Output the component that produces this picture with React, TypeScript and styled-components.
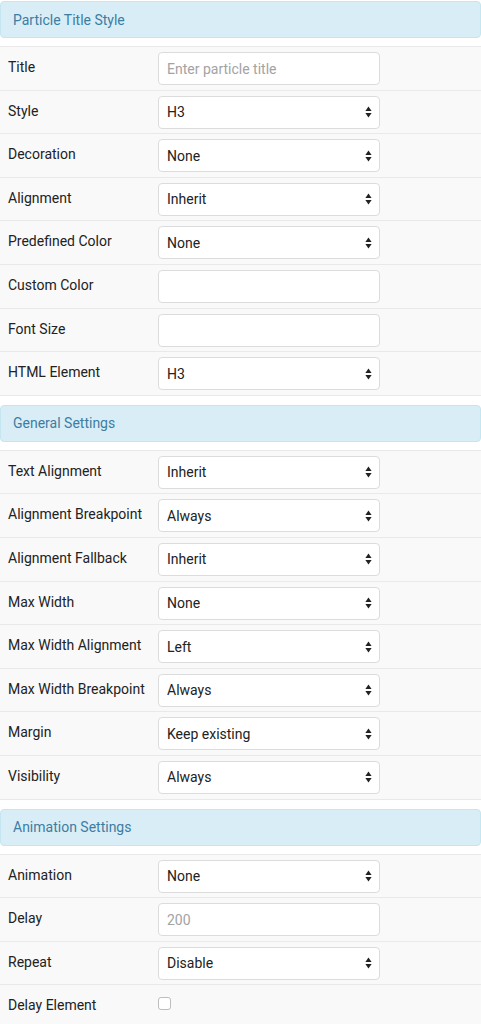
import React from 'react'
import styled, { createGlobalStyle } from 'styled-components'

type Field =
  | { label: string; kind: 'select'; value: string }
  | { label: string; kind: 'text'; value?: string; placeholder?: string }
  | { label: string; kind: 'checkbox' }

type Section = {
  title: string
  fields: Field[]
}

const SECTIONS: Section[] = [
  {
    title: 'Particle Title Style',
    fields: [
      { label: 'Title', kind: 'text', placeholder: 'Enter particle title' },
      { label: 'Style', kind: 'select', value: 'H3' },
      { label: 'Decoration', kind: 'select', value: 'None' },
      { label: 'Alignment', kind: 'select', value: 'Inherit' },
      { label: 'Predefined Color', kind: 'select', value: 'None' },
      { label: 'Custom Color', kind: 'text' },
      { label: 'Font Size', kind: 'text' },
      { label: 'HTML Element', kind: 'select', value: 'H3' },
    ],
  },
  {
    title: 'General Settings',
    fields: [
      { label: 'Text Alignment', kind: 'select', value: 'Inherit' },
      { label: 'Alignment Breakpoint', kind: 'select', value: 'Always' },
      { label: 'Alignment Fallback', kind: 'select', value: 'Inherit' },
      { label: 'Max Width', kind: 'select', value: 'None' },
      { label: 'Max Width Alignment', kind: 'select', value: 'Left' },
      { label: 'Max Width Breakpoint', kind: 'select', value: 'Always' },
      { label: 'Margin', kind: 'select', value: 'Keep existing' },
      { label: 'Visibility', kind: 'select', value: 'Always' },
    ],
  },
  {
    title: 'Animation Settings',
    fields: [
      { label: 'Animation', kind: 'select', value: 'None' },
      { label: 'Delay', kind: 'text', placeholder: '200' },
      { label: 'Repeat', kind: 'select', value: 'Disable' },
      { label: 'Delay Element', kind: 'checkbox' },
    ],
  },
]

const LABEL_WIDTH = 150

const GlobalStyle = createGlobalStyle`
  body {
    margin: 0;
    background: #fff;
    font-family: Roboto, "Liberation Sans", Arial, sans-serif;
    font-size: 14px;
    color: #333;
  }
`

const Arrows = () => (
  <ArrowSvg width="7" height="12" viewBox="0 0 7 12">
    <path d="M3.5 0.5 L6.6 5 L0.4 5 Z" fill="#222" />
    <path d="M3.5 11.5 L6.6 7 L0.4 7 Z" fill="#222" />
  </ArrowSvg>
)

const FieldControl = ({ field }: { field: Field }) => {
  if (field.kind === 'checkbox') return <Checkbox type="checkbox" />
  if (field.kind === 'select')
    return (
      <SelectWrap>
        <Select defaultValue={field.value}>
          <option>{field.value}</option>
        </Select>
        <Arrows />
      </SelectWrap>
    )
  return <TextInput type="text" placeholder={field.placeholder} defaultValue={field.value} />
}

const App = () => (
  <Page>
    <GlobalStyle />
    {SECTIONS.map((section) => (
      <Panel key={section.title}>
        <SectionHeader>{section.title}</SectionHeader>
        <Table>
          <colgroup>
            <col style={{ width: LABEL_WIDTH }} />
            <col />
          </colgroup>
          <tbody>
            {section.fields.map((field) => (
              <Row key={field.label} $compact={field.kind === 'checkbox'}>
                <LabelCell>{field.label}</LabelCell>
                <FieldCell $compact={field.kind === 'checkbox'}>
                  <FieldControl field={field} />
                </FieldCell>
              </Row>
            ))}
          </tbody>
        </Table>
      </Panel>
    ))}
  </Page>
)

export default App

const Page = styled.div`
  width: 481px;
  padding-top: 1px;
`

const Panel = styled.section`
  margin-bottom: 9px;
`

const SectionHeader = styled.div`
  box-sizing: border-box;
  height: 37px;
  padding: 0 12px;
  display: flex;
  align-items: center;
  background: #d9edf7;
  border: 1px solid #c4e6f1;
  border-radius: 4px;
  color: #3c7da2;
  font-size: 14px;
  margin-bottom: 8px;
`

const Table = styled.table`
  width: 100%;
  table-layout: fixed;
  border-collapse: collapse;
  border-spacing: 0;
`

const Row = styled.tr<{ $compact: boolean }>`
  height: ${({ $compact }) => ($compact ? '40px' : '43.6px')};
  background: #f9f9f9;
  border-top: 1px solid #e9e9e9;

  &:last-child {
    border-bottom: 1px solid #e9e9e9;
  }
`

const LabelCell = styled.td`
  box-sizing: border-box;
  padding: 10px 0 10px 8px;
  line-height: 20px;
  vertical-align: top;
  color: #222;
  font-size: 14px;
  white-space: nowrap;
  overflow: visible;
`

const FieldCell = styled.td<{ $compact: boolean }>`
  padding: ${({ $compact }) => ($compact ? '12px 8px 0' : '5px 8px 0')};
  vertical-align: top;
  line-height: 0;
`

const controlBase = `
  box-sizing: border-box;
  width: 222px;
  height: 33px;
  margin: 0;
  border: 1px solid #dcdcdc;
  border-radius: 4px;
  background: #fff;
  font-family: Roboto, "Liberation Sans", Arial, sans-serif;
  font-size: 14px;
  color: #222;
  padding: 0 8px;
  outline: none;
`

const TextInput = styled.input`
  ${controlBase}

  &::placeholder {
    color: #a3a3a3;
  }
`

const SelectWrap = styled.div`
  position: relative;
  display: inline-block;
  line-height: normal;
`

const Select = styled.select`
  ${controlBase}
  appearance: none;
  -webkit-appearance: none;
  display: block;
`

const ArrowSvg = styled.svg`
  position: absolute;
  right: 8px;
  top: 50%;
  transform: translateY(-50%);
  pointer-events: none;
`

const Checkbox = styled.input`
  appearance: none;
  -webkit-appearance: none;
  box-sizing: border-box;
  width: 13px;
  height: 13px;
  margin: 0;
  border: 1px solid #bdbdbd;
  border-radius: 3px;
  background: #fff;
`
